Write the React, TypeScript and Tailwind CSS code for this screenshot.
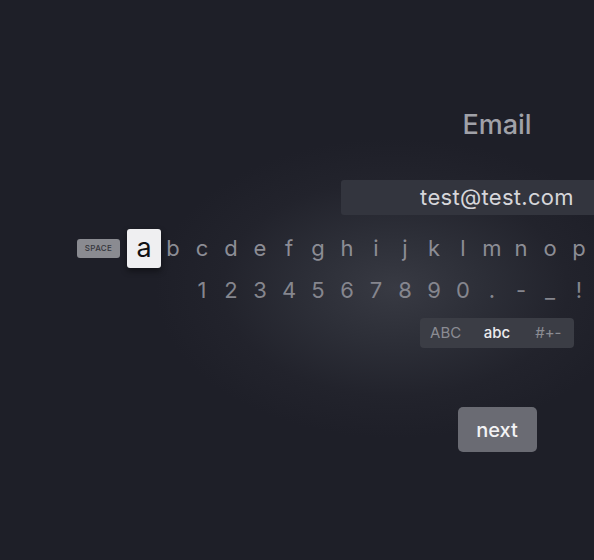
const letters = "bcdefghijklmnop".split("");
const symbols = "1234567890.-_!".split("");

function Cell({ ch }: { ch: string }) {
  return <div className="w-[29px] shrink-0 text-center">{ch}</div>;
}

export default function App() {
  return (
    <div className="w-[594px] h-[560px] overflow-hidden bg-[#1e1f28] bg-[radial-gradient(ellipse_240px_150px_at_395px_288px,#383a43_0%,#2d2f38_35%,#22232c_72%,#1e1f28_100%)] font-['Inter',sans-serif] flex flex-col">
      <div className="ml-[341px] w-[312px] shrink-0 mt-[109px] flex flex-col items-center">
        <div className="h-[32px] leading-[32px] text-[27px] text-[#a0a1a8] font-medium">
          Email
        </div>
        <div className="mt-[39px] w-[312px] h-[35px] leading-[35px] bg-[#33353e] rounded-[3px] text-center text-[22px] tracking-[0.3px] text-[#d6d6da]">
          test@test.com
        </div>
      </div>

      <div className="mt-[14px] ml-[77px] flex items-center h-[39px] leading-[39px] text-[22px] text-[#8c8d95]">
        <div className="w-[43px] h-[19px] shrink-0 rounded-[3px] bg-[#8a8b91] text-[#34353b] text-[8px] leading-[19px] font-medium text-center tracking-[0.3px]">
          SPACE
        </div>
        <div className="ml-[9.5px] w-[29px] shrink-0 flex justify-center">
          <div className="w-[34px] h-[39px] shrink-0 rounded-[3px] bg-[#efeff1] text-[#111114] text-[27px] leading-[37px] text-center shadow-[0_3px_6px_rgba(0,0,0,0.45)]">
            a
          </div>
        </div>
        {letters.map((c) => (
          <Cell key={c} ch={c} />
        ))}
      </div>

      <div className="mt-[9px] ml-[187.5px] flex h-[26px] leading-[26px] text-[22px] text-[#85868e]">
        {symbols.map((c) => (
          <Cell key={c} ch={c} />
        ))}
      </div>

      <div className="ml-[341px] w-[312px] shrink-0 mt-[15px] flex flex-col items-center">
        <div className="w-[154px] h-[30px] rounded-[4px] bg-[#3b3d45] flex items-center text-[15px]">
          <div className="flex-1 text-center text-[#8b8c93]">ABC</div>
          <div className="flex-1 text-center text-[#ececee] font-medium">abc</div>
          <div className="flex-1 text-center text-[#8b8c93]">#+-</div>
        </div>
        <div className="mt-[59px] w-[79px] h-[45px] rounded-[5px] bg-[#6a6b73] flex items-center justify-center text-[20px] font-medium text-[#f3f3f5]">
          next
        </div>
      </div>
    </div>
  );
}
